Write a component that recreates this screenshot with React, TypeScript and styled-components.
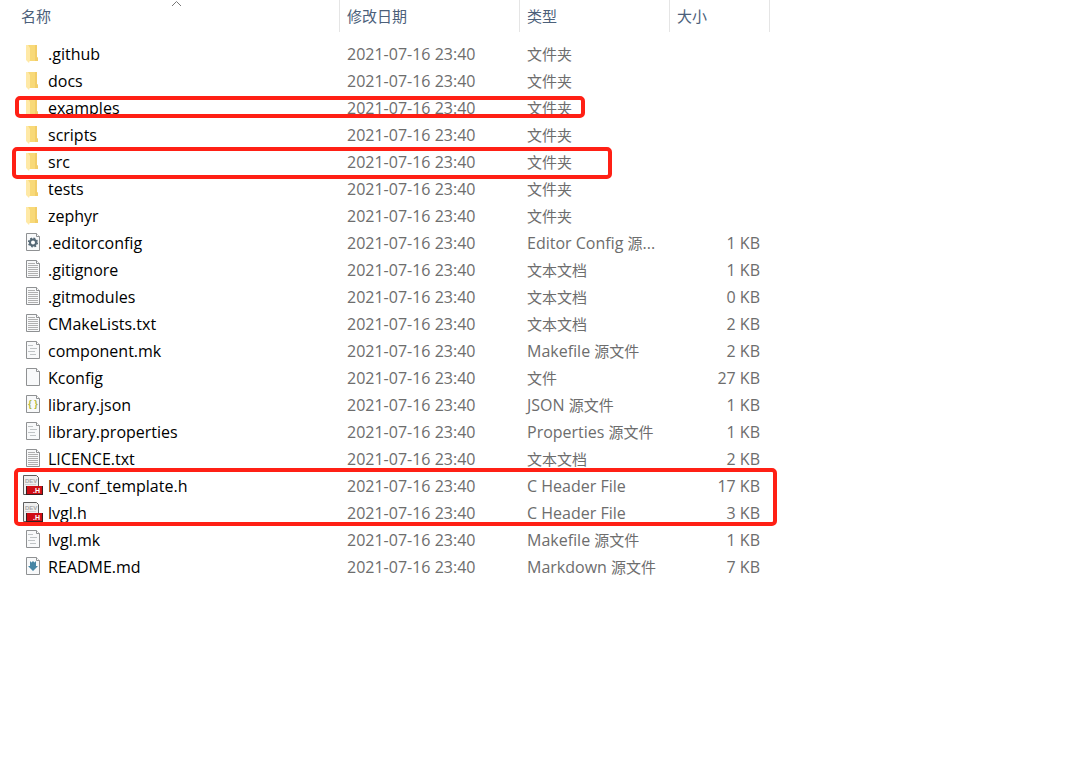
import React from "react";
import styled, { createGlobalStyle } from "styled-components";

const GlobalStyle = createGlobalStyle`
  body { margin: 0; background: #fff; }
`;

const Explorer = styled.main`
  position: relative;
  width: 100%;
  max-width: 770px;
  font-family: "Open Sans", "Noto Sans CJK SC", sans-serif;
  font-size: 16px;
  color: #6d6d6d;
`;

const FileTable = styled.table`
  width: 100%;
  table-layout: fixed;
  border-collapse: separate;
  border-spacing: 0;
`;

const Column = styled.col<{ $width?: number }>`
  width: ${(p) => (p.$width ? `${p.$width}px` : "auto")};
`;

const HeaderCell = styled.th<{ $first?: boolean }>`
  position: relative;
  box-sizing: border-box;
  height: 32px;
  padding: 0 0 0 ${(p) => (p.$first ? 21 : 7)}px;
  border-right: 1px solid #e5e5e5;
  text-align: left;
  font-size: 15px;
  line-height: 32px;
  font-weight: 400;
  color: #4c607a;
`;

const SortButton = styled.button`
  display: block;
  padding: 0;
  border: 0;
  background: none;
  font: inherit;
  color: inherit;
`;

const SortMark = styled.svg`
  position: absolute;
  top: 0;
  left: calc(50% + 1px);
`;

const Body = styled.tbody`
  &::before {
    content: "";
    display: block;
    height: 9px;
  }
`;

const Cell = styled.td<{ $right?: boolean }>`
  height: 27px;
  padding: 0 ${(p) => (p.$right ? 10 : 8)}px 0 7px;
  line-height: 27px;
  text-align: ${(p) => (p.$right ? "right" : "left")};
  white-space: nowrap;
  overflow: hidden;
`;

const Chinese = styled.span`
  font-size: 15px;
`;

const NameCell = styled.td`
  height: 27px;
  padding: 0 0 0 22px;
`;

const FileName = styled.div`
  display: flex;
  align-items: center;
  gap: 4px;
  line-height: 27px;
  color: #000;
`;

const Icon = styled.svg`
  flex: none;
  display: block;
`;

const IconText = styled.text`
  font-family: "Liberation Sans", sans-serif;
  font-weight: 700;
`;

const Mark = styled.div<{ $left: number; $top: number; $width: number; $height: number }>`
  position: absolute;
  box-sizing: border-box;
  left: ${(p) => p.$left}px;
  top: ${(p) => p.$top}px;
  width: ${(p) => p.$width}px;
  height: ${(p) => p.$height}px;
  border: 4px solid #ff2015;
  border-radius: 5px;
  pointer-events: none;
`;

type Kind = "folder" | "gear" | "text" | "source" | "blank" | "json" | "header" | "markdown";

const Page = () => (
  <>
    <path d="M4.5 3.5h10l3 3v14h-13z" fill="#f8f9fa" stroke="#8f9193" />
    <path d="M14.5 3.5v3h3" fill="#fff" stroke="#8f9193" />
  </>
);

const shapes: Record<Kind, React.ReactNode> = {
  folder: (
    <>
      <path d="M6 4h9v12l1 1v3H7z" fill="#f8d978" />
      <path d="M13 4h2v12l1 1v3h-3z" fill="#f2cd68" />
      <path d="M4 4h2l2 3v12l-1 3-3-3z" fill="#ffe9a6" />
    </>
  ),
  gear: (
    <>
      <Page />
      <circle cx="11" cy="12.5" r="3" fill="#fff" stroke="#546875" strokeWidth="2" />
      <circle cx="11" cy="12.5" r="4.3" fill="none" stroke="#546875" strokeWidth="1.6" strokeDasharray="1.8 1.577" />
    </>
  ),
  text: (
    <>
      <Page />
      <path d="M6 6.500h7M6 8.500h10M6 10.500h10M6 12.500h10M6 14.500h10M6 16.500h10M6 18.500h10" stroke="#b0b0b0" />
    </>
  ),
  source: (
    <>
      <Page />
      <path d="M6 7.500h5M8 10.500h7M6 13.500h7M8 16.500h6" stroke="#bfc3c5" />
    </>
  ),
  blank: <Page />,
  json: (
    <>
      <Page />
      <IconText x="11" y="15" textAnchor="middle" fontSize="9" fill="#b0b52f">{"{ }"}</IconText>
    </>
  ),
  header: (
    <>
      <path d="M1.500 2.500h13l2 2v17h-15z" fill="#efefef" stroke="#5d5d5d" />
      <IconText x="3" y="10" fontSize="6" fill="#a8a8a8">DEV</IconText>
      <path d="M3 11.500h11" stroke="#d2d2d2" />
      <path d="M4 13h17v9H4z" fill="#3a2020" />
      <path d="M5 13h15v8H5z" fill="#cf0d15" />
      <IconText x="11" y="20" fontSize="7" fill="#fff">.H</IconText>
    </>
  ),
  markdown: (
    <>
      <Page />
      <path d="M8 7l1.500 1.500L11 7l1.500 1.500L14 7v5h2l-5 5-5-5h2z" fill="#4686a5" />
    </>
  ),
};

const files: { name: string; kind: Kind; type: string; size?: string }[] = [
  { name: ".github", kind: "folder", type: "文件夹" },
  { name: "docs", kind: "folder", type: "文件夹" },
  { name: "examples", kind: "folder", type: "文件夹" },
  { name: "scripts", kind: "folder", type: "文件夹" },
  { name: "src", kind: "folder", type: "文件夹" },
  { name: "tests", kind: "folder", type: "文件夹" },
  { name: "zephyr", kind: "folder", type: "文件夹" },
  { name: ".editorconfig", kind: "gear", type: "Editor Config 源...", size: "1 KB" },
  { name: ".gitignore", kind: "text", type: "文本文档", size: "1 KB" },
  { name: ".gitmodules", kind: "text", type: "文本文档", size: "0 KB" },
  { name: "CMakeLists.txt", kind: "text", type: "文本文档", size: "2 KB" },
  { name: "component.mk", kind: "source", type: "Makefile 源文件", size: "2 KB" },
  { name: "Kconfig", kind: "blank", type: "文件", size: "27 KB" },
  { name: "library.json", kind: "json", type: "JSON 源文件", size: "1 KB" },
  { name: "library.properties", kind: "source", type: "Properties 源文件", size: "1 KB" },
  { name: "LICENCE.txt", kind: "text", type: "文本文档", size: "2 KB" },
  { name: "lv_conf_template.h", kind: "header", type: "C Header File", size: "17 KB" },
  { name: "lvgl.h", kind: "header", type: "C Header File", size: "3 KB" },
  { name: "lvgl.mk", kind: "source", type: "Makefile 源文件", size: "1 KB" },
  { name: "README.md", kind: "markdown", type: "Markdown 源文件", size: "7 KB" },
];

const marks = [
  { left: 15, top: 96, width: 570, height: 22 },
  { left: 12, top: 147, width: 600, height: 32 },
  { left: 14, top: 468, width: 763, height: 58 },
];

const TypeLabel = ({ text }: { text: string }) => (
  <>
    {text.split(/([\u4e00-\u9fff]+)/).map((part, i) => (i % 2 ? <Chinese key={i}>{part}</Chinese> : part))}
  </>
);

export default function App() {
  return (
    <>
      <GlobalStyle />
      <Explorer lang="zh-CN">
        <FileTable>
          <colgroup>
            <Column />
            <Column $width={180} />
            <Column $width={150} />
            <Column $width={100} />
          </colgroup>
          <thead>
            <tr>
              <HeaderCell $first aria-sort="ascending">
                <SortButton>名称</SortButton>
                <SortMark width="12" height="8" aria-hidden="true">
                  <path d="M1 6l4.500-4.500L10 6" fill="none" stroke="#777" />
                </SortMark>
              </HeaderCell>
              <HeaderCell><SortButton>修改日期</SortButton></HeaderCell>
              <HeaderCell><SortButton>类型</SortButton></HeaderCell>
              <HeaderCell><SortButton>大小</SortButton></HeaderCell>
            </tr>
          </thead>
          <Body>
            {files.map((f) => (
              <tr key={f.name}>
                <NameCell>
                  <FileName>
                    <Icon width="22" height="27" aria-hidden="true">{shapes[f.kind]}</Icon>
                    {f.name}
                  </FileName>
                </NameCell>
                <Cell>2021-07-16 23:40</Cell>
                <Cell><TypeLabel text={f.type} /></Cell>
                <Cell $right>{f.size}</Cell>
              </tr>
            ))}
          </Body>
        </FileTable>
        {marks.map((m) => (
          <Mark key={m.top} $left={m.left} $top={m.top} $width={m.width} $height={m.height} />
        ))}
      </Explorer>
    </>
  );
}
